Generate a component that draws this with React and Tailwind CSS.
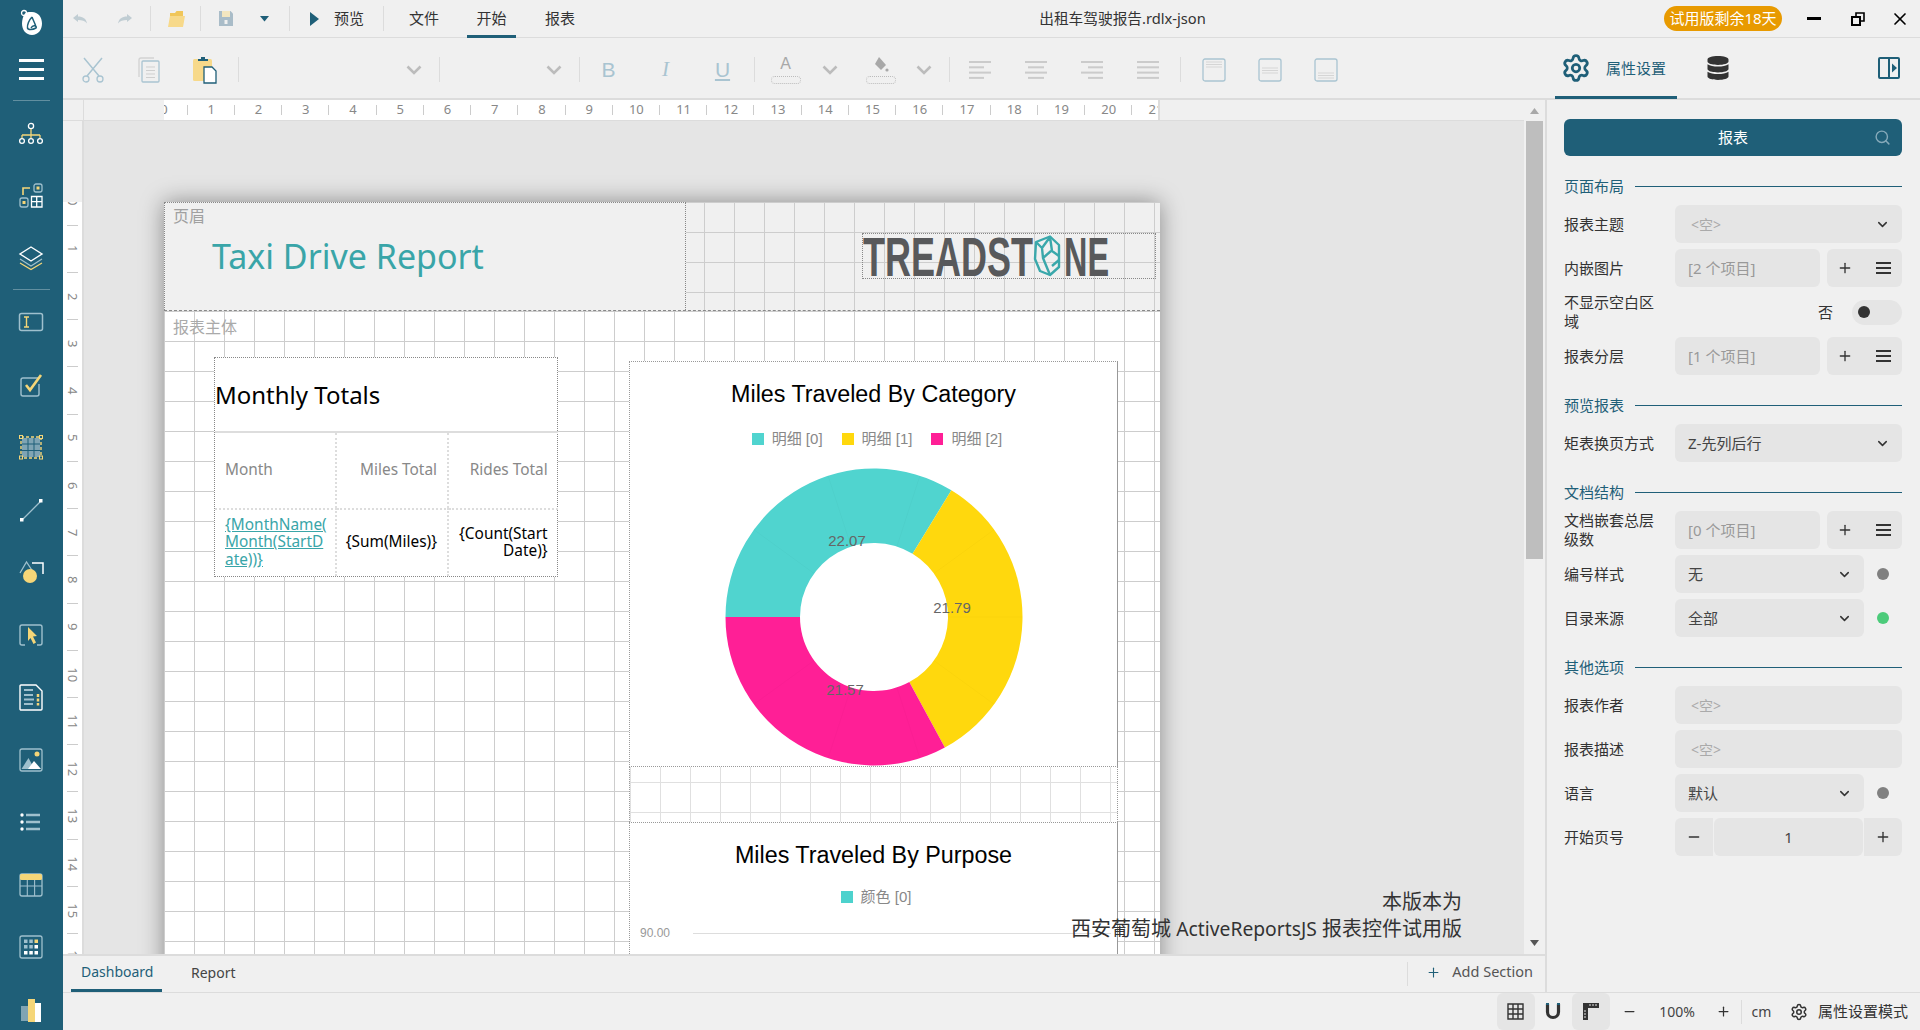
import React from "react";
import { ChevronDown, Plus, Minus, Search, Settings, X } from "lucide-react";
import { FaDatabase } from "react-icons/fa";

const Y = "#f5d678";
const P = "#9fc0cd";
const W = "#ffffff";

function Ic({ children, w = 28, h = 28 }) {
  return (
    <svg width={w} height={h} viewBox={`0 0 ${w} ${h}`} fill="none">
      {children}
    </svg>
  );
}

const topIcons = [
  <Ic key="org"><circle cx="14" cy="6" r="2.6" stroke={W} strokeWidth="1.3" /><path d="M14 9v6M5 15h18M5 15v3M23 15v3M14 15v3" stroke={Y} strokeWidth="1.3" /><circle cx="5" cy="21" r="2.4" stroke={W} strokeWidth="1.3" /><circle cx="14" cy="21" r="2.4" stroke={W} strokeWidth="1.3" /><circle cx="23" cy="21" r="2.4" stroke={W} strokeWidth="1.3" /></Ic>,
  <Ic key="comp"><rect x="17" y="2" width="8" height="8" rx="2" stroke={P} strokeWidth="1.3" /><rect x="19.5" y="4.5" width="3" height="3" fill={Y} /><path d="M13 6H6v7" stroke={Y} strokeWidth="1.6" /><rect x="3" y="16" width="8" height="9" rx="2" stroke={P} strokeWidth="1.3" /><rect x="5.5" y="19" width="3" height="3" fill={Y} /><path d="M14.5 14.5h10.5v10.5H14.5zM19.7 14.5V25M14.5 19.7H25" stroke={W} strokeWidth="1.3" /></Ic>,
  <Ic key="layers"><path d="M14 3l11 7-11 7-11-7z" stroke={W} strokeWidth="1.4" /><path d="M3 15l11 7 11-7" stroke={P} strokeWidth="1.2" /><path d="M3 19l11 6.5L25 19" stroke={Y} strokeWidth="1.3" /></Ic>,
];

const bottomIcons = [
  <Ic key="tb"><rect x="2.5" y="5.5" width="23" height="17" rx="2" stroke={P} strokeWidth="1.5" /><path d="M7 9h5M9.5 9v10M7 19h5" stroke={Y} strokeWidth="1.4" /></Ic>,
  <Ic key="chk"><path d="M21 7H6a2 2 0 00-2 2v14a2 2 0 002 2h14a2 2 0 002-2V13" stroke={P} strokeWidth="1.4" /><path d="M9 14l4 5 11-15" stroke={Y} strokeWidth="2.6" /></Ic>,
  <Ic key="mx"><rect x="5" y="5" width="18" height="19" fill="#7fa4b4" /><path d="M11 5v19M17 5v19M5 11h18M5 17.5h18" stroke="#1f5f78" strokeWidth="1" /><rect x="4" y="4" width="20" height="21" stroke={Y} strokeWidth="1.4" strokeDasharray="3 2" /><rect x="2.5" y="2.5" width="3" height="3" stroke={Y} fill="#1f5f78" /><rect x="22.5" y="2.5" width="3" height="3" stroke={Y} fill="#1f5f78" /><rect x="2.5" y="23" width="3" height="3" stroke={Y} fill="#1f5f78" /><rect x="22.5" y="23" width="3" height="3" stroke={Y} fill="#1f5f78" /></Ic>,
  <Ic key="line"><path d="M5 24L24 5" stroke={P} strokeWidth="1.3" /><rect x="3" y="22" width="3.5" height="3.5" fill={W} /><rect x="22" y="3" width="3.5" height="3.5" fill={W} /></Ic>,
  <Ic key="sh"><path d="M3 15L9.5 4l6 9" stroke={P} strokeWidth="1.3" /><path d="M15 5h11v11" stroke={W} strokeWidth="1.5" /><circle cx="13" cy="18" r="7" fill={Y} /></Ic>,
  <Ic key="sel"><path d="M8 24H5a2 2 0 01-2-2V6a2 2 0 012-2h18a2 2 0 012 2v16a2 2 0 01-2 2h-3" stroke={P} strokeWidth="1.4" /><path d="M11 6l9 9-4 .5 3 6-2.5 1.5-3-6-2.5 3z" fill={Y} /></Ic>,
  <Ic key="rep"><path d="M3 3a1 1 0 011-1h15l6 6v18a1 1 0 01-1 1H4a1 1 0 01-1-1z" stroke={W} strokeWidth="1.4" /><path d="M7 7h9M7 12h9M7 16.5h10M7 21h9" stroke={P} strokeWidth="2.2" /><path d="M21 11v3M21 15.5v3M21 20v2.5" stroke={Y} strokeWidth="2.5" /></Ic>,
  <Ic key="img"><rect x="3" y="3" width="22" height="22" rx="2" stroke={P} strokeWidth="1.3" /><circle cx="20" cy="8" r="2.5" fill={Y} /><path d="M4.5 23l7-11 6 11z" fill={P} /><path d="M11 23l6-8 7 8z" fill={W} /></Ic>,
  <Ic key="list"><circle cx="5" cy="7" r="1.7" fill={W} /><circle cx="5" cy="14" r="1.7" fill={W} /><circle cx="5" cy="21" r="1.7" fill={W} /><path d="M9 7h14M9 14h14M9 21h14" stroke={P} strokeWidth="2.4" /></Ic>,
  <Ic key="tab"><rect x="3" y="3" width="22" height="22" rx="2" stroke={P} strokeWidth="1.3" /><rect x="3" y="3" width="22" height="6" rx="1.5" fill={Y} /><path d="M3 15h22M10.3 9v16M17.6 9v16" stroke={P} strokeWidth="1.1" /></Ic>,
  <Ic key="gr"><rect x="3" y="3" width="22" height="22" rx="2" stroke={P} strokeWidth="1.3" /><path d="M7 6.5h3.5V10H7zM12.3 6.5h3.5V10h-3.5z" fill={P} /><path d="M17.5 6.5H21V10h-3.5z" fill={Y} /><path d="M7 12h3.5v3.5H7zM12.3 12h3.5v3.5h-3.5z" fill={P} /><path d="M17.5 12H21v3.5h-3.5zM7 18h3.5v3.5H7zM12.3 18h3.5v3.5h-3.5zM17.5 18H21v3.5h-3.5z" fill={W} /></Ic>,
  <Ic key="ch"><rect x="4" y="10" width="7" height="15" fill="#7fa4b4" /><rect x="11" y="3" width="7" height="23" fill={Y} /><rect x="18" y="7" width="6" height="19" fill={W} /></Ic>,
];

function Sidebar() {
  return (
    <aside className="w-[63px] shrink-0 overflow-hidden bg-[#1f5f78] flex flex-col items-center">
      <div className="h-[45px] shrink-0 flex items-center justify-center">
        <svg width="24" height="28" viewBox="0 0 24 28" fill="none">
          <path d="M5 4.5C7 2.7 9.5 3 12 3c6 0 10 5 10 11.5S18 26 12 26 2 21 2 14.5C2 11 3 7.5 5 4.5z" fill={W} />
          <circle cx="4" cy="4" r="2.5" stroke={W} strokeWidth="1.3" />
          <path d="M12 8c-3 3-5 8-4.500 11 .5 2 5 2 8.500 0 1.500-2-3-4-5 0M12 8c1 3 3 6 4 10" stroke="#1f5f78" strokeWidth="1.5" />
        </svg>
      </div>
      <div className="h-[48px] shrink-0 flex flex-col items-center justify-center gap-[6px]">
        <div className="w-[25px] h-[3px] bg-white" />
        <div className="w-[25px] h-[3px] bg-white" />
        <div className="w-[25px] h-[3px] bg-white" />
      </div>
      <div className="w-[37px] h-px shrink-0 bg-white/30 mt-[7px] mb-[2px]" />
      {topIcons.map((ic) => (
        <div key={ic.key} className="h-[62px] shrink-0 pr-px flex items-center justify-center">{ic}</div>
      ))}
      <div className="w-[37px] h-px shrink-0 bg-white/30 mb-px" />
      {bottomIcons.map((ic) => (
        <div key={ic.key} className="h-[62.5px] shrink-0 pr-px flex items-center justify-center">{ic}</div>
      ))}
    </aside>
  );
}

function Sep({ className = "" }) {
  return <div className={"w-px h-[25px] shrink-0 bg-[#dcdcdc] " + className} />;
}

function TopBar() {
  return (
    <header className="h-[38px] shrink-0 flex items-center border-b border-[#dcdcdc] text-[15px] text-[#333]">
      <div className="w-[34px] flex justify-center">
        <svg width="16" height="12" viewBox="0 0 16 12"><path d="M1 5l5-4v2.5c5 0 8 2 9 7-2-3-5-3.5-9-3.5V9z" fill="#c0cdd3" /></svg>
      </div>
      <div className="w-[34px] ml-[11px] flex justify-center">
        <svg width="16" height="12" viewBox="0 0 16 12"><path d="M15 5l-5-4v2.5c-5 0-8 2-9 7 2-3 5-3.5 9-3.5V9z" fill="#c0cdd3" /></svg>
      </div>
      <Sep className="ml-[8px]" />
      <div className="w-[49px] flex justify-center">
        <svg width="18" height="18" viewBox="0 0 18 18"><path d="M3 3h5l1.500-2H16v5H3z" fill="#f0c65a" /><path d="M3 6h15l-2 11H1z" fill="#f7d98a" /></svg>
      </div>
      <Sep />
      <div className="w-[50px] flex justify-center">
        <svg width="16" height="17" viewBox="0 0 16 17"><path d="M1 1h11.500L15 3.500V16H1z" fill="#a9bcc8" /><rect x="4" y="1" width="8" height="6" fill="#f3e6c0" /><rect x="6.5" y="10" width="3" height="4" fill="#f0f0f0" /></svg>
      </div>
      <div className="w-[26px] flex justify-center">
        <svg width="9" height="6" viewBox="0 0 9 6"><path d="M0 0h9L4.500 5.500z" fill="#1f5f78" /></svg>
      </div>
      <Sep className="ml-[12px]" />
      <div className="flex items-center pl-[20px] pr-[19px] gap-[15px]">
        <svg width="9" height="14" viewBox="0 0 9 14"><path d="M0 0l9 7-9 7z" fill="#1f5f78" /></svg>
        <span>预览</span>
      </div>
      <Sep />
      <span className="ml-[25px]">文件</span>
      <div className="ml-[28px] w-[49px] h-[38px] flex items-center justify-center border-b-[3px] border-[#1f5f78] pt-[3px]">开始</div>
      <span className="ml-[29px]">报表</span>
      <div className="flex-1 text-center pl-[6px] text-[14.7px]">出租车驾驶报告.rdlx-json</div>
      <div className="w-[118px] h-[25px] rounded-full bg-[#e89a00] text-white flex items-center justify-center">试用版剩余18天</div>
      <div className="ml-[10px] w-[44px] flex justify-center"><div className="w-[14px] h-[3px] bg-black" /></div>
      <div className="w-[44px] flex justify-center">
        <svg width="14" height="14" viewBox="0 0 14 14" fill="none"><rect x="1" y="5" width="8" height="8" stroke="#000" strokeWidth="2" /><path d="M5 4V1h8v8h-3" stroke="#000" strokeWidth="1.6" /></svg>
      </div>
      <div className="w-[40px] flex justify-center"><X size={20} strokeWidth={2} color="#000" /></div>
    </header>
  );
}

const G = "#bcbcbc";
const B = "#a9c4d1";

function AlignIcon({ kind }) {
  const rows = { l: [[0, 22], [0, 15], [0, 22], [0, 15]], c: [[0, 22], [3, 16], [0, 22], [3, 16]], r: [[0, 22], [7, 15], [0, 22], [7, 15]], j: [[0, 22], [0, 22], [0, 22], [0, 22]] }[kind];
  return (
    <svg width="22" height="18" viewBox="0 0 22 18">
      {rows.map((r, i) => <rect key={i} x={r[0]} y={i * 5.3} width={r[1]} height="2" fill="#cbcbcb" />)}
    </svg>
  );
}

function PageIcon({ pos }) {
  const y = { t: 4, m: 10, b: 15 }[pos];
  return (
    <svg width="24" height="24" viewBox="0 0 24 24" fill="none">
      <rect x="1" y="1" width="22" height="22" rx="2" stroke={B} strokeWidth="1.3" />
      <path d={`M4 ${y}h16M4 ${y + 2.5}h16M4 ${y + 5}h16`} stroke="#d5d5d5" strokeWidth="1.2" />
    </svg>
  );
}

function Chev() {
  return <svg width="16" height="10" viewBox="0 0 16 10" fill="none"><path d="M1.5 1.5L8 8l6.500-6.500" stroke={G} strokeWidth="2.6" /></svg>;
}

function Ribbon() {
  const cell = "w-[56px] flex justify-center items-center shrink-0";
  return (
    <div className="h-[62px] shrink-0 flex items-center border-b-2 border-[#dcdcdc]">
      <div className="flex items-center pt-[3px]">
        <div className="w-[2px]" />
        <div className={cell}>
          <svg width="22" height="26" viewBox="0 0 22 26" fill="none"><path d="M2 1l15 18M20 1L5 19" stroke={B} strokeWidth="1.5" /><circle cx="4" cy="22" r="3" stroke={B} strokeWidth="1.3" /><circle cx="18" cy="22" r="3" stroke={B} strokeWidth="1.3" /></svg>
        </div>
        <div className={cell}>
          <svg width="22" height="26" viewBox="0 0 22 26" fill="none"><path d="M1 20V3a2 2 0 012-2h13" stroke="#d2d2d2" strokeWidth="1.3" /><rect x="4" y="4" width="17" height="21" rx="1" stroke={B} strokeWidth="1.3" /><path d="M8 10h9M8 13.5h9M8 17h9M8 20.5h9" stroke="#cfcfcf" /></svg>
        </div>
        <div className={cell}>
          <svg width="24" height="28" viewBox="0 0 24 28"><rect x="0" y="3" width="19" height="22" rx="1.5" fill="#f7d98a" /><path d="M5 5V3h3V1h4v2h3v2z" fill="#1f5f78" /><path d="M11 11h8l4 4v12H11z" fill="#fff" stroke="#1f5f78" strokeWidth="1.3" /></svg>
        </div>
        <Sep className="ml-[5px]" />
        <div className="w-[167px]" />
        <Chev />
        <Sep className="ml-[17px]" />
        <div className="w-[106px]" />
        <Chev />
        <Sep className="ml-[17px]" />
        <div className="w-[57px] flex justify-center text-[21px] text-[#a9c4d1] font-['Liberation_Sans',sans-serif]">B</div>
        <div className="w-[57px] flex justify-center text-[21px] italic text-[#a9c4d1] font-['Liberation_Serif',serif]">I</div>
        <div className="w-[57px] flex justify-center text-[21px] underline text-[#a9c4d1] font-['Liberation_Sans',sans-serif]">U</div>
        <Sep className="ml-[3px]" />
        <div className="w-[61px] flex flex-col items-center">
          <span className="text-[16px] leading-[18px] text-[#a8a8a8] font-['Liberation_Sans',sans-serif]">A</span>
          <div className="w-[30px] h-[8px] mt-[3px] rounded-sm border border-dotted border-[#bbb]" />
        </div>
        <div className="w-[28px] flex justify-center"><Chev /></div>
        <div className="ml-[7px] w-[59px] flex flex-col items-center">
          <svg width="16" height="17" viewBox="0 0 16 17"><path d="M6 1l7 8-5 5-6-6z" fill="#a8a8a8" /><circle cx="14" cy="14" r="1.6" fill="#a8a8a8" /></svg>
          <div className="w-[30px] h-[8px] mt-[3px] rounded-sm border border-dotted border-[#bbb]" />
        </div>
        <div className="w-[28px] flex justify-center"><Chev /></div>
        <Sep className="ml-[11px]" />
        <div className="w-[2px]" />
        <div className={cell}><AlignIcon kind="l" /></div>
        <div className={cell}><AlignIcon kind="c" /></div>
        <div className={cell}><AlignIcon kind="r" /></div>
        <div className={cell}><AlignIcon kind="j" /></div>
        <Sep className="ml-[4px]" />
        <div className="w-[5px]" />
        <div className={cell}><PageIcon pos="t" /></div>
        <div className={cell}><PageIcon pos="m" /></div>
        <div className={cell}><PageIcon pos="b" /></div>
      </div>
      <div className="flex-1" />
      <div className="w-[122px] h-[61px] flex items-center pl-[6px] gap-[15px] border-b-[3px] border-[#1f5f78] pt-[3px]">
        <Settings size={30} strokeWidth={2.2} color="#1f5f78" />
        <span className="text-[15px] text-[#1f5f78]">属性设置</span>
      </div>
      <div className="ml-[28px] w-[26px] flex justify-center"><FaDatabase size={24} color="#333" /></div>
      <div className="ml-[147px] mr-[20px] w-[22px] flex justify-center">
        <svg width="22" height="22" viewBox="0 0 22 22" fill="none"><rect x="1" y="1" width="20" height="20" rx="1" stroke="#1f5f78" strokeWidth="2" /><path d="M11 1v20" stroke="#1f5f78" strokeWidth="2" /><path d="M14 6.500l5 4.500-5 4.500z" fill="#1f5f78" /></svg>
      </div>
    </div>
  );
}

const rulerNums = Array.from({ length: 22 }, (_, i) => i);

function HRuler() {
  return (
    <div className="h-[21px] shrink-0 flex border-b border-[#dcdcdc]">
      <div className="w-[101px] shrink-0 flex justify-end"><div className="w-[81px] h-full border-l border-[#dcdcdc]" /></div>
      <div className="w-[996px] shrink-0 bg-white overflow-hidden border-r-2 border-[#dcdcdc]">
        <div className="flex h-full -ml-[23.62px] w-[1100px]">
          {rulerNums.map((n) => (
            <div key={n} className="w-[47.24px] shrink-0 relative flex items-center justify-center text-[13px] text-[#888]">
              {n}
              <div className="absolute right-0 top-[5px] w-px h-[10px] bg-[#ccc]" />
            </div>
          ))}
        </div>
      </div>
    </div>
  );
}

function VRuler() {
  return (
    <div className="w-[21px] shrink-0 pt-[81px] border-r-2 border-[#dcdcdc] overflow-hidden">
      <div className="bg-white h-full overflow-hidden">
        <div className="-mt-[23.62px]">
          {rulerNums.slice(0, 18).map((n) => (
            <div key={n} className="h-[47.24px] relative flex items-center justify-center text-[13px] text-[#888]">
              <span className="rotate-90 block">{n}</span>
              <div className="absolute bottom-0 left-[4px] h-px w-[11px] bg-[#ccc]" />
            </div>
          ))}
        </div>
      </div>
    </div>
  );
}

const polar = (cx, cy, r, deg) => {
  const a = ((deg - 90) * Math.PI) / 180;
  return [cx + r * Math.cos(a), cy + r * Math.sin(a)];
};

function arc(cx, cy, R, r, a, b) {
  const [x1, y1] = polar(cx, cy, R, a);
  const [x2, y2] = polar(cx, cy, R, b);
  const [x3, y3] = polar(cx, cy, r, b);
  const [x4, y4] = polar(cx, cy, r, a);
  return `M${x1} ${y1}A${R} ${R} 0 0 1 ${x2} ${y2}L${x3} ${y3}A${r} ${r} 0 0 0 ${x4} ${y4}Z`;
}

function Donut() {
  const c = 150;
  const ticks = [18, 54, 90, 126, 162, 198, 234, 306, 342];
  return (
    <svg width="300" height="300" viewBox="0 0 300 300" className="block mx-auto">
      <path d={arc(c, c, 148.5, 74, -90, 31.4)} fill="#50d4cf" />
      <path d={arc(c, c, 148.5, 74, 31.4, 151.5)} fill="#ffd80d" />
      <path d={arc(c, c, 148.5, 74, 151.5, 270)} fill="#ff1f96" />
      {ticks.map((t) => {
        const [x1, y1] = polar(c, c, 74, t);
        const [x2, y2] = polar(c, c, 148.5, t);
        return <line key={t} x1={x1} y1={y1} x2={x2} y2={y2} stroke="#000" strokeOpacity="0.02" />;
      })}
      <g fontFamily="'Liberation Sans',sans-serif" fontSize="15" fill="#666" textAnchor="middle">
        <text x="123" y="79">22.07</text>
        <text x="228" y="146">21.79</text>
        <text x="121" y="228">21.57</text>
      </g>
    </svg>
  );
}

function Legend({ color, label }) {
  return (
    <div className="flex items-center gap-[8px]">
      <div className="w-[12px] h-[12px]" style={{ background: color }} />
      <span className="text-[15px] text-[#888] font-['Liberation_Sans','Noto_Sans_CJK_SC',sans-serif]">{label}</span>
    </div>
  );
}

const gridBg = "bg-[linear-gradient(to_right,#cdcdcd_1px,transparent_1px),linear-gradient(to_bottom,#cdcdcd_1px,transparent_1px)] bg-[size:30px_30px]";

function Logo() {
  return (
    <div className="absolute left-[698px] top-[31px] w-[294px] h-[46px] border border-dotted border-[#888]">
      <svg width="250" height="44" viewBox="0 0 250 44" className="block">
        <g fontFamily="'Liberation Sans',sans-serif" fontWeight="700" fontSize="55" fill="#58595b">
          <text x="0" y="42" textLength="170" lengthAdjust="spacingAndGlyphs">TREADST</text>
          <text x="201" y="42" textLength="45" lengthAdjust="spacingAndGlyphs">NE</text>
        </g>
        <g fill="none" stroke="#3aa8ab" strokeWidth="2.4" strokeLinejoin="round">
          <path d="M173 8l14-5.500 9 8.500v22l-9 8-10-4-5-12z" />
          <path d="M173 8l6 6 8-11M179 14l1 10 7 17M187 3l2 14 7 5M180 24l8-7M189 32l7-6" />
        </g>
      </svg>
    </div>
  );
}

function Table() {
  const cell = "flex items-center px-[10px] pb-[2px] text-[15.4px] leading-[17.3px]";
  const sep = " border-r-2 border-dotted border-[#ddd]";
  return (
    <div className="absolute left-[50px] top-[46px] w-[344px] h-[220px] bg-white border border-dotted border-[#888] grid grid-cols-[122px_112px_1fr] grid-rows-[75px_75px_1fr]">
      <div className="col-span-3 flex items-center text-[24px] text-black border-b-2 border-[#ddd]">Monthly Totals</div>
      <div className={cell + " text-[#888]" + sep}>Month</div>
      <div className={cell + " justify-end text-[#888]" + sep}>Miles Total</div>
      <div className={cell + " justify-end text-[#888]"}>Rides Total</div>
      <div className={cell + " pr-0 text-[#39a5a8] underline border-t-2" + sep}>
        <span>{"{MonthName("}<br />{"Month(StartD"}<br />{"ate))}"}</span>
      </div>
      <div className={cell + " justify-end text-black border-t-2" + sep}>{"{Sum(Miles)}"}</div>
      <div className={cell + " justify-end text-right text-black border-t-2 border-dotted border-[#ddd]"}>
        <span>{"{Count(Start"}<br />{"Date)}"}</span>
      </div>
    </div>
  );
}

function Page() {
  return (
    <div className="w-[996px] h-[900px] shrink-0 shadow-[0_0_22px_rgba(0,0,0,0.4)] flex flex-col">
      <div className={"relative h-[109px] shrink-0 bg-[#f0f0f0] border-b border-dashed border-[#888] " + gridBg}>
        <div className="absolute left-0 top-0 w-[522px] h-[108px] bg-[#f0f0f0] border-l border-t border-r border-dotted border-[#888]">
          <div className="absolute left-[8px] top-[1px] text-[16px] text-[#a0a0a0]">页眉</div>
          <div className="absolute left-[47px] top-[29px] text-[34px] leading-[48px] text-[#39a5a8] whitespace-nowrap">Taxi Drive Report</div>
        </div>
        <Logo />
      </div>
      <div className={"relative flex-1 bg-white " + gridBg}>
        <div className="absolute left-[9px] top-[4px] text-[16px] text-[#aaa]">报表主体</div>
        <Table />
        <div className="absolute left-[465px] top-[50px] w-[489px] h-[406px] bg-white border border-dotted [border-right-style:solid] border-[#999] pt-[19px] font-['Liberation_Sans','Noto_Sans_CJK_SC',sans-serif]">
          <div className="h-[26px] text-center text-[23.3px] leading-[26px] text-black">Miles Traveled By Category</div>
          <div className="mt-[22px] h-[20px] pl-[7px] flex justify-center gap-[19px]">
            <Legend color="#50d4cf" label="明细 [0]" />
            <Legend color="#ffd80d" label="明细 [1]" />
            <Legend color="#ff1f96" label="明细 [2]" />
          </div>
          <div className="mt-[18px]"><Donut /></div>
        </div>
        <div className="absolute left-[465px] top-[456px] w-[489px] h-[55px] bg-white bg-[linear-gradient(to_right,#e0e0e0_1px,transparent_1px),linear-gradient(to_bottom,#e0e0e0_1px,transparent_1px)] bg-[size:30px_30px] bg-[position:0_15px] border-x border-dotted border-[#999]" />
        <div className="absolute left-[465px] top-[511px] w-[489px] h-[300px] bg-white border border-dotted [border-right-style:solid] border-[#999] pt-[19px] font-['Liberation_Sans','Noto_Sans_CJK_SC',sans-serif]">
          <div className="h-[26px] text-center text-[23.3px] leading-[26px] text-black">Miles Traveled By Purpose</div>
          <div className="mt-[19px] h-[20px] pl-[5px] flex justify-center"><Legend color="#4dd2cd" label="颜色 [0]" /></div>
          <div className="mt-[17px] flex items-center pl-[10px]">
            <span className="text-[12px] text-[#999] w-[53px]">90.00</span>
            <div className="flex-1 h-px bg-[#ddd] mr-[6px]" />
          </div>
        </div>
      </div>
    </div>
  );
}

function Canvas() {
  return (
    <div className="relative flex-1 min-w-0 overflow-hidden bg-[#e5e5e5] pl-[80px] pt-[81px]">
      <Page />
      <div className="absolute right-[62px] top-[767px] text-right text-[20px] leading-[27px] text-[#333] whitespace-nowrap">
        <div>本版本为</div>
        <div>西安葡萄城 <span className="text-[19.3px]">ActiveReportsJS</span> 报表控件试用版</div>
      </div>
    </div>
  );
}

function Scrollbar() {
  return (
    <div className="w-[21px] shrink-0 flex flex-col items-center">
      <div className="h-[21px] flex items-center justify-center">
        <svg width="9" height="6" viewBox="0 0 9 6"><path d="M0 6h9L4.500 0z" fill="#a8a8a8" /></svg>
      </div>
      <div className="w-[17px] h-[438px] bg-[#bebebe]" />
      <div className="flex-1" />
      <div className="h-[22px] flex items-center justify-center">
        <svg width="9" height="6" viewBox="0 0 9 6"><path d="M0 0h9L4.500 6z" fill="#555" /></svg>
      </div>
    </div>
  );
}

function TabBar() {
  return (
    <div className="h-[38px] shrink-0 flex items-stretch border-t-2 border-[#dcdcdc] text-[14px]">
      <div className="ml-[8px] w-[91px] pl-[10px] pb-[2px] flex items-center border-b-[3px] border-[#1f5f78] text-[#1f5f78]">Dashboard</div>
      <div className="ml-[29px] pb-[4px] flex items-center text-[#444]">Report</div>
      <div className="flex-1" />
      <div className="w-px h-[24px] self-center bg-[#dcdcdc]" />
      <div className="flex items-center pl-[18px] pr-[12px] pb-[4px] gap-[11px] text-[#555]">
        <Plus size={15} strokeWidth={1.8} color="#1f5f78" />
        <span className="text-[14.5px]">Add Section</span>
      </div>
    </div>
  );
}

function Section({ title, children }) {
  return (
    <section className="pt-[20px]">
      <div className="h-[20px] mb-[9px] flex items-center gap-[11px]">
        <span className="text-[15px] text-[#1f5f78] whitespace-nowrap">{title}</span>
        <div className="flex-1 h-px bg-[#1f5f78]" />
      </div>
      <div className="flex flex-col gap-[6px]">{children}</div>
    </section>
  );
}

function Row({ label, children }) {
  return (
    <div className="h-[38px] flex items-center">
      <div className="w-[100px] mr-[11px] shrink-0 text-[15px] leading-[19px] text-[#333]">{label}</div>
      {children}
    </div>
  );
}

function Placeholder() {
  return <span className="text-[14px] text-[#aaa] pl-[16px]">&lt;空&gt;</span>;
}

function ItemList({ text }) {
  return (
    <>
      <div className="w-[145px] h-[38px] rounded-md bg-[#e5e5e5] flex items-center pl-[13px] text-[15px] text-[#999]">{text}</div>
      <div className="ml-[7px] w-[75px] h-[38px] rounded-md bg-[#e5e5e5] flex items-center justify-between pl-[10px] pr-[11px]">
        <Plus size={16} strokeWidth={2} color="#333" />
        <div className="flex flex-col gap-[3px]">
          <div className="w-[15px] h-[2px] bg-[#333]" />
          <div className="w-[15px] h-[2px] bg-[#333]" />
          <div className="w-[15px] h-[2px] bg-[#333]" />
        </div>
      </div>
    </>
  );
}

function Dot({ color }) {
  return <div className="w-[12px] h-[12px] rounded-full ml-[13px]" style={{ background: color }} />;
}

function SelectBox({ text, short, color }) {
  return (
    <div className={(short ? "w-[189px]" : "flex-1") + " h-[38px] rounded-md bg-[#e5e5e5] flex items-center justify-between pr-[12px]"}>
      {text ? <span className="pl-[13px] text-[15px]" style={{ color }}>{text}</span> : <Placeholder />}
      <ChevronDown size={15} strokeWidth={2.4} color="#333" />
    </div>
  );
}

function Panel() {
  return (
    <aside className="w-[375px] shrink-0 border-l-2 border-[#dcdcdc] pl-[17px] pr-[18px] pt-[19px]">
      <div className="h-[37px] rounded-md bg-[#1f5f78] relative flex items-center justify-center text-white text-[15px]">
        报表
        <Search size={17} color="#86aaba" strokeWidth={2} className="absolute right-[11px]" />
      </div>
      <Section title="页面布局">
        <Row label="报表主题"><SelectBox /></Row>
        <Row label="内嵌图片"><ItemList text="[2 个项目]" /></Row>
        <Row label="不显示空白区域">
          <div className="flex-1 flex items-center justify-end gap-[19px]">
            <span className="text-[15px] text-[#333]">否</span>
            <div className="w-[50px] h-[25px] rounded-full bg-[#e5e5e5] flex items-center pl-[6px]">
              <div className="w-[12px] h-[12px] rounded-full bg-[#333]" />
            </div>
          </div>
        </Row>
        <Row label="报表分层"><ItemList text="[1 个项目]" /></Row>
      </Section>
      <Section title="预览报表">
        <Row label="矩表换页方式"><SelectBox text="Z-先列后行" color="#444" /></Row>
      </Section>
      <Section title="文档结构">
        <Row label="文档嵌套总层级数"><ItemList text="[0 个项目]" /></Row>
        <Row label="编号样式"><SelectBox text="无" short color="#444" /><Dot color="#808080" /></Row>
        <Row label="目录来源"><SelectBox text="全部" short color="#444" /><Dot color="#4ccb7a" /></Row>
      </Section>
      <Section title="其他选项">
        <Row label="报表作者"><div className="flex-1 h-[38px] rounded-md bg-[#e5e5e5] flex items-center"><Placeholder /></div></Row>
        <Row label="报表描述"><div className="flex-1 h-[38px] rounded-md bg-[#e5e5e5] flex items-center"><Placeholder /></div></Row>
        <Row label="语言"><SelectBox text="默认" short color="#444" /><Dot color="#808080" /></Row>
        <Row label="开始页号">
          <div className="flex-1 h-[38px] flex gap-px text-[15px] text-[#444]">
            <div className="w-[38px] rounded-l-md bg-[#e5e5e5] flex items-center justify-center"><Minus size={16} strokeWidth={2} color="#333" /></div>
            <div className="flex-1 bg-[#e5e5e5] rounded-md flex items-center justify-center">1</div>
            <div className="w-[38px] rounded-r-md bg-[#e5e5e5] flex items-center justify-center"><Plus size={16} strokeWidth={2} color="#333" /></div>
          </div>
        </Row>
      </Section>
    </aside>
  );
}

function StatusBar() {
  const toggled = "w-[38px] h-[37px] rounded-md bg-[#e5e5e5] flex items-center justify-center";
  return (
    <div className="h-[38px] shrink-0 flex items-center justify-end border-t border-[#dcdcdc] text-[14px] text-[#444]">
      <div className={toggled}>
        <svg width="17" height="17" viewBox="0 0 17 17" fill="none"><path d="M1 1h15v15H1zM6 1v15M11 1v15M1 6h15M1 11h15" stroke="#333" strokeWidth="1.4" /></svg>
      </div>
      <div className="w-[37px] flex justify-center">
        <svg width="16" height="18" viewBox="0 0 16 18" fill="none"><path d="M2.5 1v8a5.500 5.500 0 0011 0V1" stroke="#333" strokeWidth="3.2" /><path d="M1 1h3M12 1h3" stroke="#1f5f78" strokeWidth="2" /></svg>
      </div>
      <div className={toggled}>
        <svg width="16" height="17" viewBox="0 0 16 17"><path d="M0 0h16v5H5v12H0z" fill="#333" /><path d="M7 1v2M10 1v2M13 1v2M1 8h2M1 11h2M1 14h2" stroke="#e5e5e5" /></svg>
      </div>
      <div className="w-[40px] flex justify-center"><Minus size={15} strokeWidth={2} color="#333" /></div>
      <div className="w-[54px] text-center">100%</div>
      <div className="w-[40px] flex justify-center"><Plus size={15} strokeWidth={2} color="#333" /></div>
      <div className="w-px h-[24px] bg-[#dcdcdc] ml-[-3px]" />
      <div className="w-[39px] text-center">cm</div>
      <div className="ml-[9px] flex items-center gap-[10px] pr-[12px]">
        <Settings size={18} strokeWidth={2} color="#333" />
        <span className="text-[15px] text-[#333]">属性设置模式</span>
      </div>
    </div>
  );
}

export default function App() {
  return (
    <div className="w-[1920px] h-[1030px] flex overflow-hidden bg-[#f0f0f0] text-[#333] font-['Noto_Sans','Noto_Sans_CJK_SC',sans-serif]">
      <Sidebar />
      <div className="flex-1 min-w-0 flex flex-col">
        <TopBar />
        <Ribbon />
        <div className="flex-1 min-h-0 flex">
          <div className="flex-1 min-w-0 flex flex-col">
            <div className="flex-1 min-h-0 flex">
              <div className="flex-1 min-w-0 flex flex-col">
                <HRuler />
                <div className="flex-1 min-h-0 flex">
                  <VRuler />
                  <Canvas />
                </div>
              </div>
              <Scrollbar />
            </div>
            <TabBar />
          </div>
          <Panel />
        </div>
        <StatusBar />
      </div>
    </div>
  );
}
